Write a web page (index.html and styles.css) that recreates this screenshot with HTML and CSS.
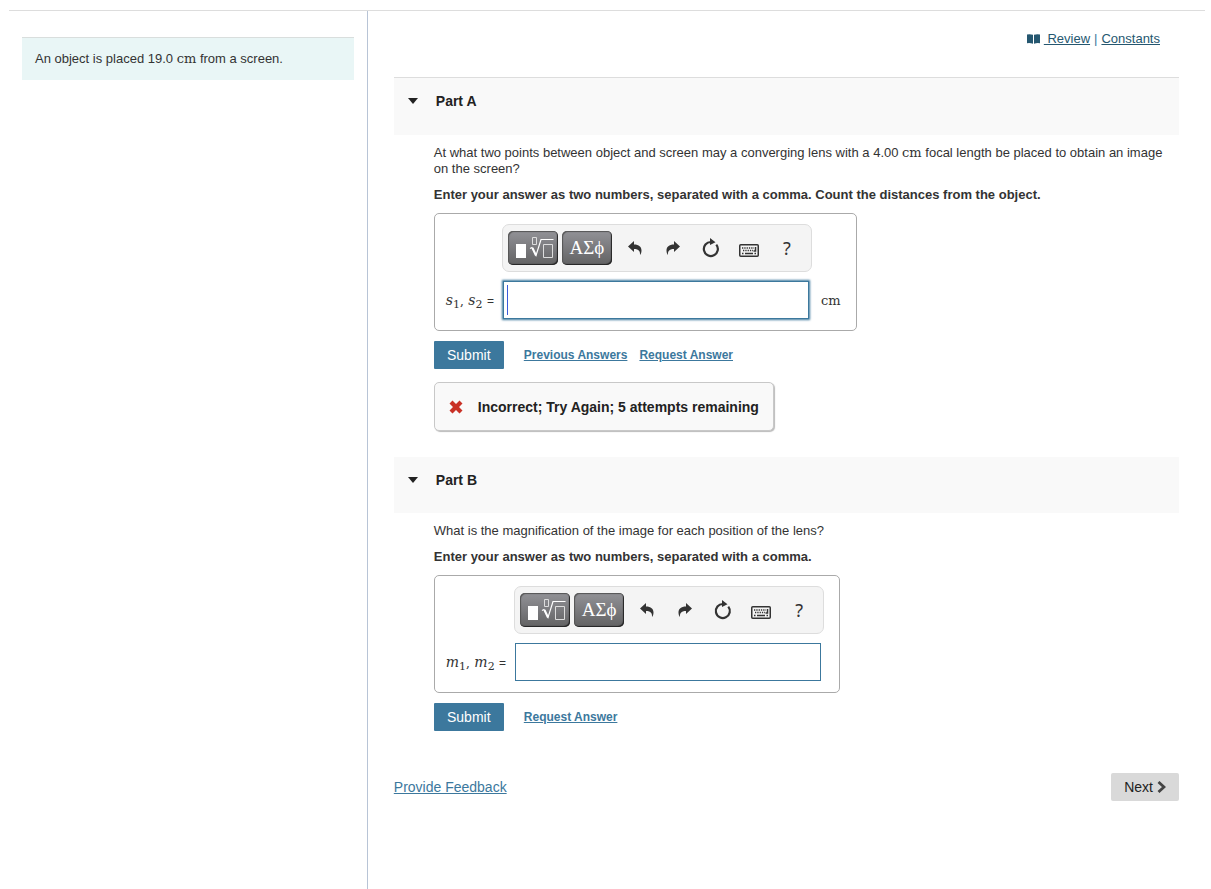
FILE: index.html
```html
<!DOCTYPE html>
<html lang="en">
<head>
<meta charset="utf-8">
<title>Lens Problem</title>
<link rel="stylesheet" href="styles.css">
</head>
<body>
<svg class="sprite" aria-hidden="true">
  <symbol id="template" viewBox="0 0 50 34">
    <path d="M8 13h10v14H8z" fill="#fff"/>
    <path d="M24.500 6.500h4v7h-4zM35.500 13.500h9v13h-9z" fill="none" stroke="#ddd"/>
    <path d="M22 17.500l2-1 4 8 5-16h12.500" fill="none" stroke="#fff" stroke-width="1.200"/>
    <path d="M24.500 17l3.500 7.500" stroke="#fff" stroke-width="2"/>
  </symbol>
  <symbol id="undo" viewBox="0 0 16 16"><path d="M1 6.500 7 1v3.500c5 0 7.500 2.500 7.500 6 0 2-.7 3.500-1.500 4.500.3-3.500-1-6-6-6v3z"/></symbol>
  <symbol id="redo" viewBox="0 0 16 16"><path d="M15 6.500 9 1v3.500c-5 0-7.500 2.500-7.500 6 0 2 .7 3.500 1.500 4.500-.3-3.500 1-6 6-6v3z"/></symbol>
  <symbol id="reset" viewBox="0 0 18 20"><path d="M14.300 6.600A7 7 0 1 1 9 4" fill="none" stroke="#333" stroke-width="2.200"/><path d="M8 0l5.500 4.200L8 7z"/></symbol>
  <symbol id="keyboard" viewBox="0 0 20 13"><rect x=".75" y=".75" width="18.500" height="11.500" rx="1" fill="none" stroke="#333" stroke-width="1.500"/><path d="M3 4h12M4 6.500h10" stroke="#333" stroke-width="1.500" stroke-dasharray="1.300 1"/><path d="M16.500 3v4h-2M3 9.500h1.500M6 9.500h8M15.500 9.500H17" fill="none" stroke="#333" stroke-width="1.500"/></symbol>
</svg>
<div class="page">
  <aside class="intro">
    <p class="given">An object is placed 19.0 <span class="unit">cm</span> from a screen.</p>
  </aside>
  <main class="work">
    <nav class="tools">
      <svg class="book" viewBox="0 0 13 10" aria-hidden="true"><path d="M0 .5q3-.8 6 .3v9Q3 8.500 0 9.200zM7 .8q3-1.100 6-.3v8.700q-3-.7-6 .6z"/></svg>
      <a href="#review">&nbsp;Review</a> | <a href="#constants">Constants</a>
    </nav>

    <section class="part">
      <h2 class="part-head first"><span class="arrow"></span>Part A</h2>
      <div class="part-body">
        <p>At what two points between object and screen may a converging lens with a 4.00 <span class="unit">cm</span> focal length be placed to obtain an image on the screen?</p>
        <p class="instruction">Enter your answer as two numbers, separated with a comma. Count the distances from the object.</p>
        <div class="answer">
          <div class="toolbar">
            <button class="pad" type="button" aria-label="Templates"><svg width="50" height="34"><use href="#template"/></svg></button>
            <button class="pad greek" type="button">ΑΣϕ</button>
            <div class="actions">
              <button type="button" aria-label="Undo"><svg width="16" height="16"><use href="#undo"/></svg></button>
              <button type="button" aria-label="Redo"><svg width="16" height="16"><use href="#redo"/></svg></button>
              <button type="button" aria-label="Reset"><svg width="18" height="20"><use href="#reset"/></svg></button>
              <button type="button" aria-label="Keyboard"><svg class="keys" width="20" height="13"><use href="#keyboard"/></svg></button>
              <button type="button" class="help">?</button>
            </div>
          </div>
          <label for="answer-a"><i>s</i><sub>1</sub><span class="comma">,</span> <i>s</i><sub>2</sub> <span class="equals">=</span></label>
          <div class="field active"><input id="answer-a" type="text"><span class="caret"></span></div>
          <span class="unit after">cm</span>
        </div>
        <div class="submit-row">
          <button class="submit" type="button">Submit</button>
          <a href="#previous">Previous Answers</a>
          <a href="#request-a">Request Answer</a>
        </div>
        <div class="result">
          <svg width="14" height="14" viewBox="0 0 14 14" aria-hidden="true"><path d="M3.500.5 7 4l3.500-3.500 3 3L10 7l3.500 3.500-3 3L7 10l-3.500 3.500-3-3L4 7 .5 3.500z"/></svg>
          <span>Incorrect; Try Again; 5 attempts remaining</span>
        </div>
      </div>
    </section>

    <section class="part">
      <h2 class="part-head"><span class="arrow"></span>Part B</h2>
      <div class="part-body">
        <p>What is the magnification of the image for each position of the lens?</p>
        <p class="instruction">Enter your answer as two numbers, separated with a comma.</p>
        <div class="answer">
          <div class="toolbar">
            <button class="pad" type="button" aria-label="Templates"><svg width="50" height="34"><use href="#template"/></svg></button>
            <button class="pad greek" type="button">ΑΣϕ</button>
            <div class="actions">
              <button type="button" aria-label="Undo"><svg width="16" height="16"><use href="#undo"/></svg></button>
              <button type="button" aria-label="Redo"><svg width="16" height="16"><use href="#redo"/></svg></button>
              <button type="button" aria-label="Reset"><svg width="18" height="20"><use href="#reset"/></svg></button>
              <button type="button" aria-label="Keyboard"><svg class="keys" width="20" height="13"><use href="#keyboard"/></svg></button>
              <button type="button" class="help">?</button>
            </div>
          </div>
          <label for="answer-b"><i>m</i><sub>1</sub><span class="comma">,</span> <i>m</i><sub>2</sub> <span class="equals">=</span></label>
          <div class="field"><input id="answer-b" type="text"></div>
        </div>
        <div class="submit-row">
          <button class="submit" type="button">Submit</button>
          <a href="#request-b">Request Answer</a>
        </div>
      </div>
    </section>

    <footer class="foot">
      <a href="#feedback">Provide Feedback</a>
      <button class="next" type="button">Next <svg width="9" height="12" viewBox="0 0 9 12" aria-hidden="true"><path d="M1.500 1 7 6l-5.500 5"/></svg></button>
    </footer>
  </main>
</div>
</body>
</html>
```
FILE: styles.css
```css
* { box-sizing: border-box; }
body {
  margin: 10px 6px 0 9px;
  font: 13px/16px "Liberation Sans", Arial, sans-serif;
  color: #333;
  background: #fff;
}
p, h2 { margin: 0; }
button { font: inherit; color: inherit; border: 0; padding: 0; background: none; cursor: pointer; }
svg { display: block; }
.sprite { display: none; }
.page {
  display: grid;
  grid-template-columns: 3fr 7fr;
  min-height: calc(100vh - 10px);
  border-top: 1px solid #ddd;
}
.intro { padding: 26px 13px; border-right: 1px solid #b8c4d6; }
.given {
  padding: 13px;
  border-top: 1px solid #d9dedd;
  background: #e9f6f6;
}
.unit { font-family: "DejaVu Serif", serif; font-size: 13px; line-height: 1; }
.work { padding: 20px 26px 26px; }
.tools {
  display: flex;
  justify-content: flex-end;
  align-items: center;
  gap: 4px;
  padding-right: 19px;
  color: #3c789d;
}
.tools a { color: #255770; }
.book { width: 13px; height: 10px; fill: #255770; }
.part-head {
  display: flex;
  align-items: center;
  gap: 18px;
  height: 56px;
  padding: 0 14px 10px;
  background: #f9f9f9;
  font-size: 14px;
  color: #222;
}
.part-head.first { height: 58px; margin-top: 30px; padding-bottom: 12px; border-top: 1px solid #ddd; }
.arrow { border: 5px solid transparent; border-top: 6px solid #222; border-bottom: 0; }
.part-body { padding: 10px 0 26px 40px; }
.instruction { margin: 10px 0; font-weight: bold; }
.answer {
  display: inline-grid;
  grid-template-columns: auto auto auto;
  align-items: center;
  row-gap: 9px;
  padding: 10px 15px 11px 11px;
  border: 1px solid #aaa;
  border-radius: 5px;
  vertical-align: top;
}
.toolbar {
  grid-column: 2;
  display: flex;
  align-items: center;
  gap: 4px;
  padding: 6px 5px;
  border: 1px solid #ddd;
  border-radius: 7px;
  background: #f4f4f4;
}
.pad {
  width: 50px;
  height: 34px;
  border-radius: 5px;
  background: linear-gradient(#929297, #626263);
  box-shadow: inset -1px -1px 1px #222, inset 1px 1px 1px #555;
  color: #fff;
}
.greek { font: 19px/30px "Liberation Serif", serif; }
.actions { display: flex; }
.actions button { display: grid; place-items: center; width: 38px; height: 34px; }
.actions svg { fill: #333; }
.actions .keys { margin-top: 4px; }
.actions .help { font: 18px/30px "Noto Sans", sans-serif; }
.answer label { grid-column: 1; padding-right: 8px; font: 14px/20px "DejaVu Serif", serif; }
.answer sub { font-size: 11px; line-height: 1; vertical-align: -3px; }
.comma, .equals { font-size: 12px; }
.equals { font-family: "Liberation Sans", sans-serif; }
.field { position: relative; padding: 0 3px 0 1px; }
.field input {
  display: block;
  width: 100%;
  height: 38px;
  padding: 4px;
  border: 1px solid #3c789d;
  outline: 0;
  font: inherit;
}
.active input { box-shadow: 0 0 2px 1px #3c789d; }
.caret { position: absolute; left: 5px; top: 4px; width: 1px; height: 30px; background: #3b5bdb; }
.after { padding-left: 9px; }
.submit-row {
  display: flex;
  align-items: center;
  gap: 12px;
  margin-top: 10px;
  font-size: 12px;
  font-weight: bold;
}
a { color: #3c789d; }
.submit {
  width: 70px;
  height: 28px;
  margin-right: 8px;
  border-radius: 1px;
  background: #3c789d;
  color: #fff;
  font-size: 14px;
  font-weight: normal;
}
.result {
  display: flex;
  align-items: center;
  gap: 15px;
  width: fit-content;
  margin-top: 13px;
  padding: 16px 14px 15px;
  border: 1px solid #c8c8c8;
  border-radius: 5px;
  background: #f9f9f9;
  box-shadow: 1px 1px 1px #bbb;
  color: #222;
  font-size: 14px;
  font-weight: bold;
}
.result svg { fill: #c93126; }
.foot { display: flex; justify-content: space-between; align-items: center; margin-top: 16px; font-size: 14px; }
.next { display: flex; align-items: center; gap: 4px; height: 28px; padding: 0 13px; border-radius: 2px; background: #d9d9d9; color: #222; }
.next path { fill: none; stroke: #444; stroke-width: 2.8; }
```
